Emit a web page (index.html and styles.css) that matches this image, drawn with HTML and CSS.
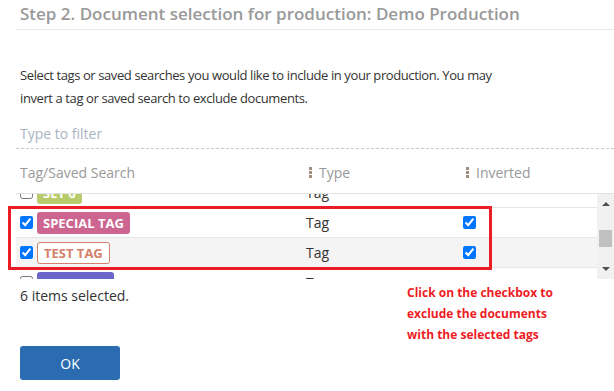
FILE: index.html
```html
<!DOCTYPE html>
<html lang="en">
<head>
  <meta charset="UTF-8">
  <meta name="viewport" content="width=device-width, initial-scale=1.0">
  <title>Production - Document selection</title>
  <link rel="stylesheet" href="styles.css">
</head>
<body>
  <div class="page">
    <h4 class="step-title">Step 2. Document selection for production: Demo Production</h4>

    <p class="intro">Select tags or saved searches you would like to include in your production. You may invert a tag or saved search to exclude documents.</p>

    <input type="text" class="filter" placeholder="Type to filter">

    <div class="grid">
      <div class="grid-head">
        <div class="col-name">Tag/Saved Search</div>
        <div class="col-type"><span class="grip"></span>Type</div>
        <div class="col-inv"><span class="grip"></span>Inverted</div>
      </div>

      <div class="grid-body">
        <div class="rows">
          <div class="row">
            <div class="col-name"><input type="checkbox"><span class="tag tag-green">SET 6</span></div>
            <div class="col-type">Tag</div>
            <div class="col-inv"></div>
          </div>
          <div class="row">
            <div class="col-name"><input type="checkbox" checked><span class="tag tag-pink">SPECIAL TAG</span></div>
            <div class="col-type">Tag</div>
            <div class="col-inv"><input type="checkbox" checked></div>
          </div>
          <div class="row row-hover">
            <div class="col-name"><input type="checkbox" checked><span class="tag tag-outline">TEST TAG</span></div>
            <div class="col-type">Tag</div>
            <div class="col-inv"><input type="checkbox" checked></div>
          </div>
          <div class="row">
            <div class="col-name"><input type="checkbox"><span class="tag tag-purple">REVIEWED</span></div>
            <div class="col-type">Tag</div>
            <div class="col-inv"></div>
          </div>
        </div>

        <div class="scrollbar">
          <span class="arrow-up"></span>
          <div class="track"><div class="thumb"></div></div>
          <span class="arrow-down"></span>
        </div>
      </div>
    </div>

    <div class="footer">
      <div class="count">6 items selected.</div>
      <p class="note">Click on the checkbox to exclude the documents with the selected tags</p>
    </div>

    <button class="btn-ok">OK</button>

    <!-- annotation box around the inverted rows -->
    <div class="highlight"></div>
  </div>
</body>
</html>
```

FILE: styles.css
```css
* {
  box-sizing: border-box;
  margin: 0;
  padding: 0;
}

body {
  font-family: 'Open Sans', sans-serif;
  font-size: 14px;
  color: #333;
  background: #fff;
}

.page {
  position: relative;
  padding-left: 16px;
}

.step-title {
  font-size: 17px;
  font-weight: 600;
  color: #999;
  padding: 2px 0 0 4px;
  height: 30px;
  border-bottom: 1px solid #e8e8e8;
}

.intro {
  margin-top: 34px;
  padding-left: 4px;
  max-width: 500px;
  font-size: 13px;
  letter-spacing: -0.4px;
  line-height: 23px;
}

.filter {
  display: block;
  width: 100%;
  height: 39px;
  padding: 9px 4px 0;
  border: none;
  border-bottom: 1px dashed #ccc;
  font-family: 'Open Sans', sans-serif;
  font-size: 14px;
  outline: none;
}

.filter::placeholder {
  color: #a9b4c2;
}

.grid-head,
.row {
  display: grid;
  grid-template-columns: 286px 157px 1fr;
  align-items: center;
}

.grid-head {
  height: 45px;
  padding-top: 3px;
  color: #999;
  border-bottom: 1px solid #e3e3e3;
}

.grid-head .col-name {
  padding-left: 4px;
}

.grid-head .col-type,
.grid-head .col-inv {
  display: flex;
  align-items: center;
  padding-left: 7px;
}

/* column resize handle */
.grip {
  width: 3px;
  height: 11px;
  margin-right: 7px;
  background: repeating-linear-gradient(#9e8e80 0 3px, transparent 3px 4px);
}

.grid-body {
  display: flex;
  height: 85px;
  overflow: hidden;
}

.rows {
  flex: 1;
  margin-top: -16px;
}

.row {
  height: 30px;
  background: #fff;
  border-bottom: 1px solid #e6e6e6;
}

.row-hover {
  background: #f4f4f4;
}

.row .col-name {
  display: flex;
  align-items: center;
  padding-left: 4px;
}

.row .col-type {
  padding-left: 4px;
}

.row .col-inv {
  display: flex;
  padding-left: 4px;
}

.row input[type="checkbox"] {
  width: 13px;
  height: 13px;
  margin: 0 4px 0 0;
}

.tag {
  display: inline-block;
  height: 22px;
  line-height: 22px;
  padding: 0 6px;
  border-radius: 3px;
  font-size: 13px;
  font-weight: 700;
  color: #fff;
}

.tag-green {
  background: #b8cc6c;
}

.tag-pink {
  background: #cc6590;
}

.tag-outline {
  background: #fff;
  color: #d4806a;
  border: 1px solid #d4806a;
  line-height: 20px;
}

.tag-purple {
  background: #6d66c9;
}

.scrollbar {
  width: 17px;
  background: #f1f1f1;
  display: flex;
  flex-direction: column;
  align-items: center;
}

.arrow-up,
.arrow-down {
  width: 0;
  height: 0;
  border-left: 4px solid transparent;
  border-right: 4px solid transparent;
}

.arrow-up {
  margin-top: 8px;
  border-bottom: 4px solid #505050;
}

.arrow-down {
  margin-bottom: 8px;
  border-top: 4px solid #505050;
}

.track {
  flex: 1;
  width: 100%;
  padding: 24px 2px 0;
}

.thumb {
  height: 17px;
  background: #c1c1c1;
}

.footer {
  display: flex;
  margin-top: 3px;
}

.count {
  flex-shrink: 0;
  width: 391px;
  padding-left: 4px;
  padding-top: 4px;
}

.note {
  width: 160px;
  color: #ee1c25;
  font-size: 12px;
  font-weight: 700;
  line-height: 21px;
}

.btn-ok {
  display: block;
  width: 100px;
  height: 34px;
  margin: 1px 0 0 4px;
  background: #2b6cb0;
  color: #fff;
  border: none;
  border-radius: 3px;
  font-family: 'Open Sans', sans-serif;
  font-size: 14px;
}

.highlight {
  position: absolute;
  left: 8px;
  top: 206px;
  width: 484px;
  height: 64px;
  border: 3px solid #ec1c24;
}
```
